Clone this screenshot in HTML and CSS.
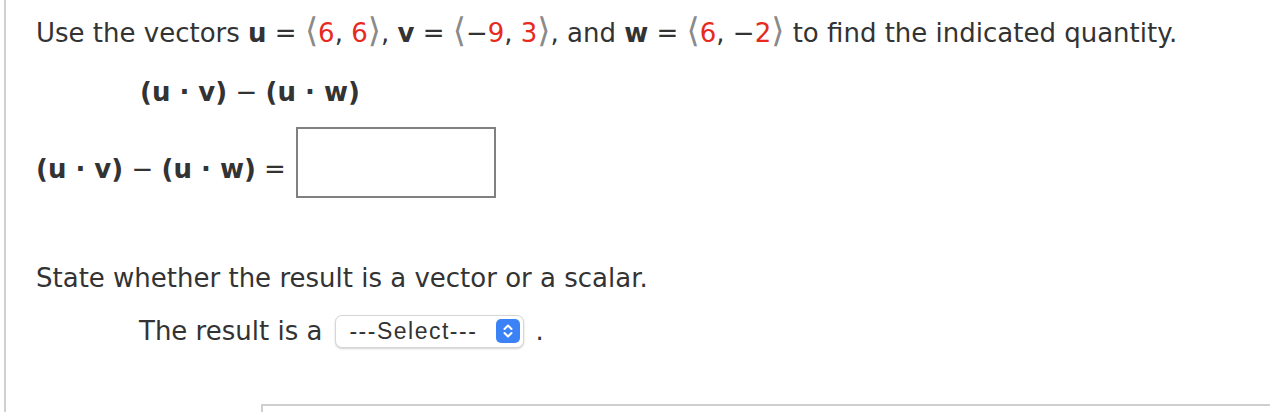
FILE: index.html
```html
<!DOCTYPE html>
<html lang="en">
<head>
<meta charset="utf-8">
<title>Vectors question</title>
<link rel="stylesheet" href="styles.css">
</head>
<body>
<div class="question">
  <p class="intro">Use the vectors <b>u</b> = <span class="ang">⟨</span><span class="num">6</span>, <span class="num">6</span><span class="ang">⟩</span>, <b>v</b> = <span class="ang">⟨</span>−<span class="num">9</span>, <span class="num">3</span><span class="ang">⟩</span>, and <b>w</b> = <span class="ang">⟨</span><span class="num">6</span>, −<span class="num">2</span><span class="ang">⟩</span> to find the indicated quantity.</p>
  <p class="expr"><b>(u · v)</b> − <b>(u · w)</b></p>
  <div class="answer-row">
    <span class="label"><b>(u · v)</b> − <b>(u · w)</b> =</span>
    <input class="answer-box" type="text" aria-label="answer">
  </div>
  <p class="state">State whether the result is a vector or a scalar.</p>
  <div class="select-row">
    <span>The result is a</span>
    <div class="select">
      <span class="select-text">---Select---</span>
      <span class="select-icon"><svg width="24" height="24" viewBox="0 0 24 24"><rect x="0" y="0" width="24" height="24" rx="5" fill="#3b82f6"/><path d="M8.5 10 L12 6.5 L15.5 10" fill="none" stroke="#fff" stroke-width="2" stroke-linecap="round" stroke-linejoin="round"/><path d="M8.5 14 L12 17.5 L15.5 14" fill="none" stroke="#fff" stroke-width="2" stroke-linecap="round" stroke-linejoin="round"/></svg></span>
    </div>
    <span class="dot">.</span>
  </div>
  <div class="next-box"></div>
</div>
</body>
</html>
```

FILE: styles.css
```css
html, body {
  margin: 0;
  padding: 0;
  background: #fff;
}
body {
  padding-left: 4px;
  font-family: "DejaVu Sans", Verdana, sans-serif;
  font-size: 26px;
  line-height: 34px;
  color: #333;
}
.question {
  border-left: 2px solid #d0d0d0;
  height: 412px;
  padding-left: 30px;
  padding-top: 16px;
  box-sizing: border-box;
  overflow: hidden;
}
p {
  margin: 0;
}
b {
  font-weight: bold;
}
.num {
  color: #e62a1e;
}
.ang {
  color: #8a8a8a;
  font-size: 1.3em;
  line-height: 0;
}
.expr {
  margin-top: 25px;
  padding-left: 104px;
}
.answer-row {
  display: flex;
  align-items: flex-start;
  margin-top: 18px;
}
.answer-row .label {
  padding-top: 25px;
}
.answer-box {
  margin-left: 10px;
  width: 200px;
  height: 71px;
  box-sizing: border-box;
  border: 2px solid #808080;
  padding: 0;
  background: #fff;
  font: inherit;
}
.state {
  margin-top: 63px;
}
.select-row {
  display: flex;
  align-items: center;
  margin-top: 19px;
  padding-left: 103px;
  height: 34px;
}
.select {
  display: flex;
  align-items: center;
  justify-content: space-between;
  margin-left: 13px;
  width: 189px;
  height: 33px;
  box-sizing: border-box;
  border: 1px solid #d6d6d6;
  border-radius: 7px;
  box-shadow: 0 1px 2px rgba(0,0,0,0.18);
  padding: 0 3px 0 13px;
  background: #fff;
}
.select-text {
  font-family: "Liberation Sans", Arial, sans-serif;
  font-size: 23px;
  letter-spacing: 1.5px;
  color: #333;
  line-height: 1;
}
.select-icon {
  display: flex;
  width: 24px;
  height: 24px;
}
.dot {
  margin-left: 11px;
}
.next-box {
  margin-top: 56px;
  margin-left: 225px;
  height: 20px;
  border-top: 2px solid #cfcfcf;
  border-left: 2px solid #cfcfcf;
}
```
